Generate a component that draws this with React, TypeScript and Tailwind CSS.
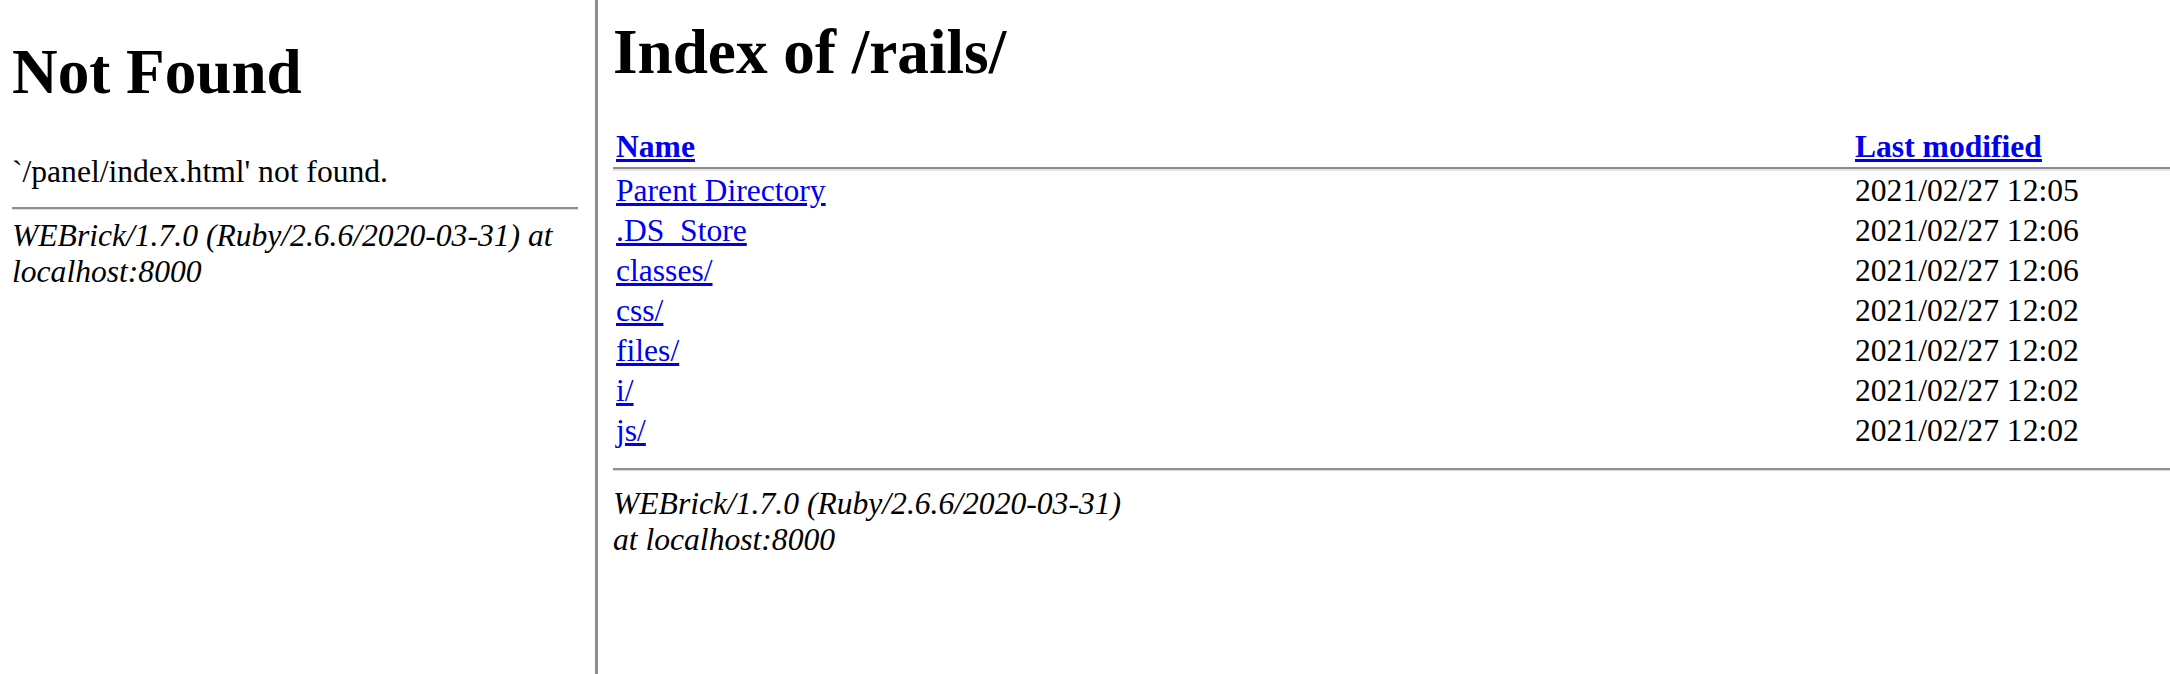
const serif = { fontFamily: '"Liberation Serif", "Times New Roman", serif' };

const entries = [
  { name: "Parent Directory", mtime: "2021/02/27 12:05" },
  { name: ".DS_Store", mtime: "2021/02/27 12:06" },
  { name: "classes/", mtime: "2021/02/27 12:06" },
  { name: "css/", mtime: "2021/02/27 12:02" },
  { name: "files/", mtime: "2021/02/27 12:02" },
  { name: "i/", mtime: "2021/02/27 12:02" },
  { name: "js/", mtime: "2021/02/27 12:02" },
];

function Rule() {
  return <div className="h-[3px] border-t-2 border-b border-t-[#8f8f8f] border-b-[#dcdcdc]" />;
}

function NotFoundFrame() {
  return (
    <div className="w-[598px] shrink-0 border-r-[3px] border-[#8e8e8e] pl-[12px] pr-[17px] pt-[36px]">
      <h1 className="text-[63.2px] leading-[72px] font-bold">Not Found</h1>
      <p className="mt-[46px]">`/panel/index.html' not found.</p>
      <div className="mt-[17px]">
        <Rule />
      </div>
      <address className="mt-[8px] italic">
        WEBrick/1.7.0 (Ruby/2.6.6/2020-03-31) at
        <br />
        localhost:8000
      </address>
    </div>
  );
}

function IndexFrame() {
  return (
    <div className="min-w-0 flex-1 pl-[15px] pt-[16px]">
      <h1 className="text-[63.2px] leading-[72px] font-bold">Index of /rails/</h1>

      <div className="mt-[39px]">
        <div className="grid grid-cols-[1239px_1fr] border-b-2 border-[#8c8c8c]">
          <div className="py-[2px] pl-[3px] font-bold">
            <a className="text-[#0000ee] underline">Name</a>
          </div>
          <div className="py-[2px] pl-[3px] font-bold">
            <a className="text-[#0000ee] underline">Last modified</a>
          </div>
        </div>
        <div className="h-[2px] bg-[#e4e4e4]" />
        {entries.map((e) => (
          <div key={e.name} className="grid grid-cols-[1239px_1fr]">
            <div className="py-[2px] pl-[3px]">
              <a className="text-[#0000ee] underline">{e.name}</a>
            </div>
            <div className="py-[2px] pl-[3px] whitespace-nowrap">{e.mtime}</div>
          </div>
        ))}
      </div>

      <div className="mt-[17px]">
        <Rule />
      </div>
      <address className="mt-[15px] italic">
        WEBrick/1.7.0 (Ruby/2.6.6/2020-03-31)
        <br />
        at localhost:8000
      </address>
    </div>
  );
}

export default function App() {
  return (
    <div
      className="flex h-[674px] w-[2170px] overflow-hidden bg-white text-[31.6px] leading-[36px] text-black"
      style={serif}
    >
      <NotFoundFrame />
      <IndexFrame />
    </div>
  );
}
